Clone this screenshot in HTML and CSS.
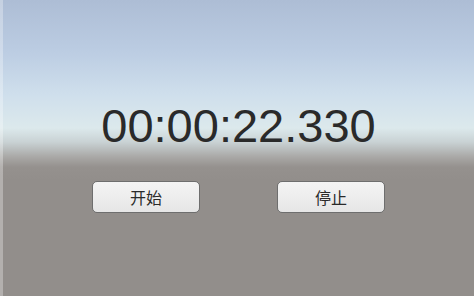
FILE: index.html
```html
<!DOCTYPE html>
<html lang="zh">

<head>
    <meta charset="UTF-8">
    <meta name="viewport" content="width=device-width, initial-scale=1.0">
    <title>Stopwatch</title>
    <link rel="stylesheet" href="styles.css">
</head>

<body>
    <!-- Stopwatch scene -->
    <div class="scene">
        <div class="time-display">00:00:22.330</div>
        <div class="controls">
            <button class="ctrl-btn">开始</button>
            <button class="ctrl-btn">停止</button>
        </div>
    </div>
</body>

</html>
```

FILE: styles.css
```css
body {
    margin: 0;
    padding: 0;
    font-family: 'Liberation Sans', 'Noto Sans CJK SC', sans-serif;
}

/* Sky and ground backdrop */
.scene {
    width: 474px;
    height: 296px;
    box-sizing: border-box;
    padding-top: 98px;
    background: linear-gradient(to bottom,
            #adbdd5 0px,
            #bbcce2 50px,
            #cfdfec 95px,
            #dce9ec 128px,
            #c9d2d4 142px,
            #a9a8a6 157px,
            #95918e 167px,
            #928e8b 180px,
            #928e8b 296px);
    border-left: 3px solid rgba(255, 255, 255, 0.3);
}

/* Big timer text */
.time-display {
    text-align: center;
    font-size: 47px;
    line-height: 56px;
    color: #2a2a2a;
}

/* Start / stop buttons */
.controls {
    display: flex;
    justify-content: center;
    gap: 77px;
    margin-top: 27px;
}

.ctrl-btn {
    width: 108px;
    height: 32px;
    padding: 0;
    font-family: 'Liberation Sans', 'Noto Sans CJK SC', sans-serif;
    font-size: 16px;
    color: #2a2a2a;
    background: linear-gradient(to bottom, #f4f4f4, #e6e6e6);
    border: 1px solid #6e6e6e;
    border-radius: 5px;
}
```
